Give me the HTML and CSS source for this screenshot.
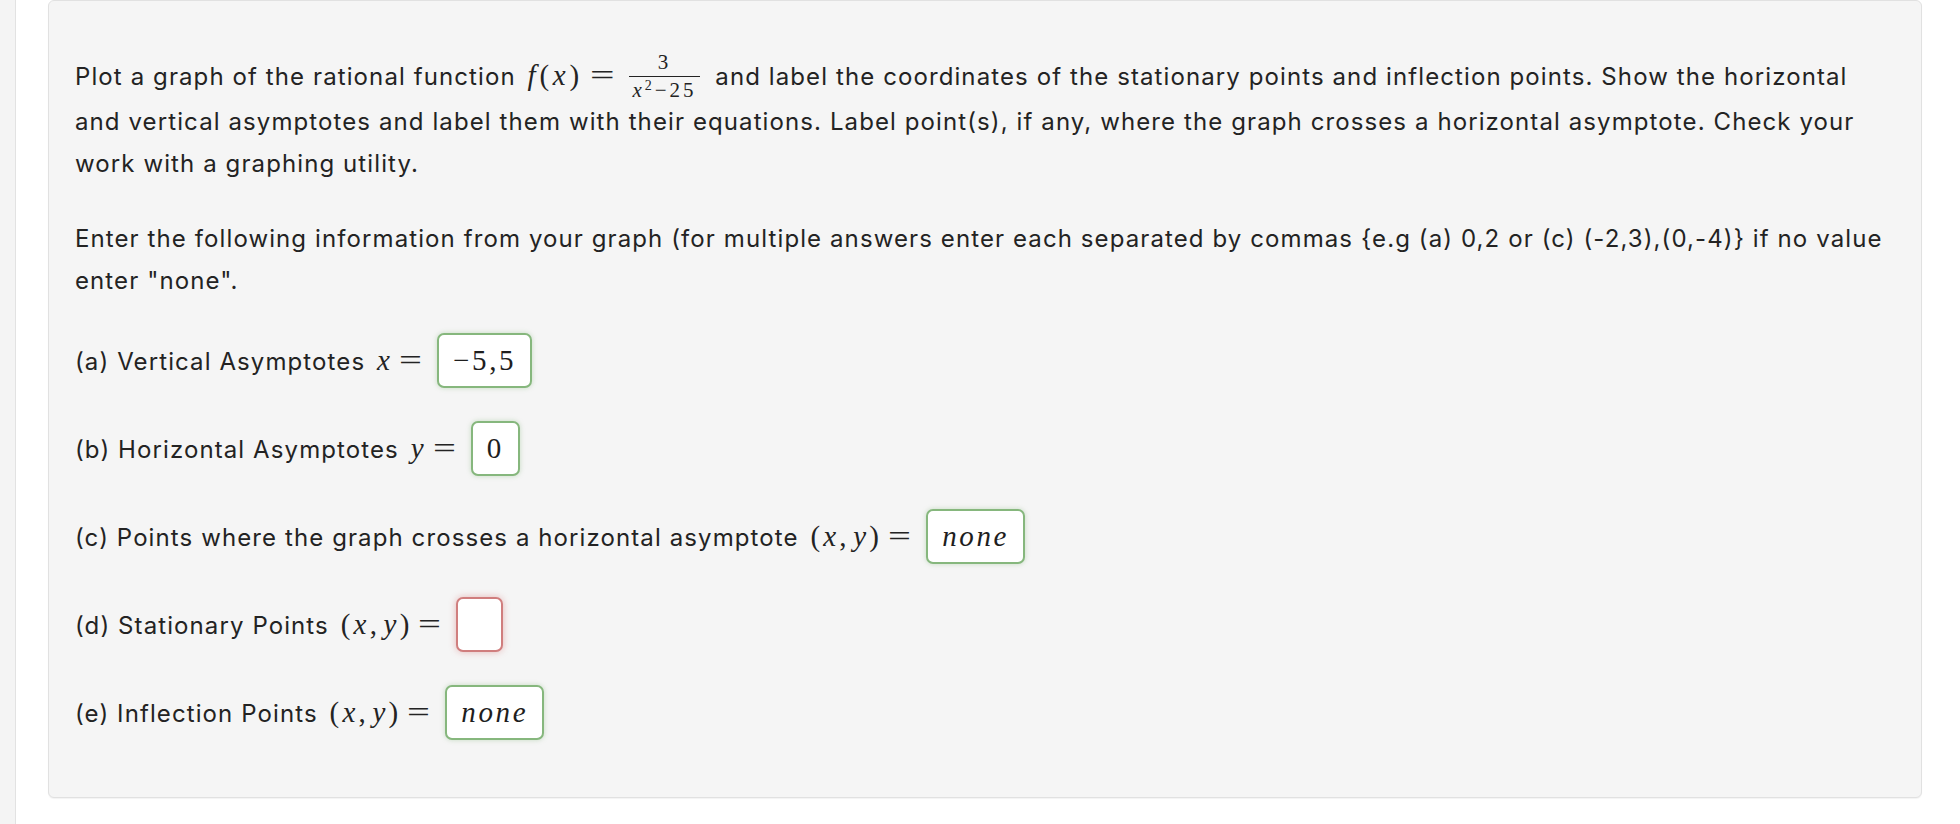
FILE: index.html
```html
<!DOCTYPE html>
<html lang="en">
<head>
<meta charset="utf-8">
<title>Rational function question</title>
<link rel="stylesheet" href="styles.css">
</head>
<body>
<div class="page">
  <div class="rail"></div>
  <main class="main">
    <section class="panel">
      <p class="para">Plot a graph of the rational function <span class="math eq"><i>f</i>(<i>x</i>)<span class="rel">=</span><span class="frac"><span class="num">3</span><span class="den"><i>x</i><sup>2</sup>−25</span></span></span> and label the coordinates of the stationary points and inflection points. Show the horizontal and vertical asymptotes and label them with their equations. Label point(s), if any, where the graph crosses a horizontal asymptote. Check your work with a graphing utility.</p>
      <p class="para last">Enter the following information from your graph (for multiple answers enter each separated by commas {e.g (a) 0,2 or (c) (-2,3),(0,-4)} if no value enter "none".</p>
      <div class="row">
        <span class="label">(a) Vertical Asymptotes <span class="math"><i>x</i><span class="rel">=</span></span></span>
        <span class="answer ok">−5,5</span>
      </div>
      <div class="row">
        <span class="label">(b) Horizontal Asymptotes <span class="math"><i>y</i><span class="rel">=</span></span></span>
        <span class="answer ok">0</span>
      </div>
      <div class="row">
        <span class="label">(c) Points where the graph crosses a horizontal asymptote <span class="math">(<i>x</i>,<span class="sp"></span><i>y</i>)<span class="rel">=</span></span></span>
        <span class="answer ok"><i>none</i></span>
      </div>
      <div class="row">
        <span class="label">(d) Stationary Points <span class="math">(<i>x</i>,<span class="sp"></span><i>y</i>)<span class="rel">=</span></span></span>
        <span class="answer bad"></span>
      </div>
      <div class="row">
        <span class="label">(e) Inflection Points <span class="math">(<i>x</i>,<span class="sp"></span><i>y</i>)<span class="rel">=</span></span></span>
        <span class="answer ok"><i>none</i></span>
      </div>
    </section>
  </main>
</div>
</body>
</html>
```

FILE: styles.css
```css
html, body {
  margin: 0;
  padding: 0;
  background: #ffffff;
}

.page {
  display: flex;
  min-height: 824px;
  font-family: "Inter", "Liberation Sans", sans-serif;
  color: #232323;
}

.rail {
  width: 15px;
  flex: none;
  background: #f4f4f4;
  border-right: 1px solid #e2e2e2;
}

.main {
  flex: 1;
  padding: 0 38px 0 32px;
  background: #ffffff;
}

.panel {
  background: #f5f5f5;
  border: 1px solid #e1e1e1;
  border-radius: 6px;
  box-shadow: 0 1px 1px rgba(0, 0, 0, 0.05);
  padding: 53px 22px 57px 26px;
  font-size: 24px;
  letter-spacing: 1.1px;
}

.para {
  margin: 0 0 32px 0;
  line-height: 42.5px;
}

.para.last {
  margin-bottom: 30px;
}

.math {
  font-family: "Liberation Serif", "DejaVu Serif", serif;
  font-size: 29px;
  letter-spacing: 0.11em;
  white-space: nowrap;
  margin: 0 3px 0 4px;
}

.math.eq {
  letter-spacing: 0.13em;
  margin-right: 7px;
}

.math i {
  font-style: italic;
}

.rel {
  display: inline-block;
  margin: 0 0.4em 0 0.34em;
  transform: scaleX(1.4);
}

.eq .rel {
  margin: 0 0.46em 0 0.42em;
  transform: scaleX(1.5);
}

.sp {
  display: inline-block;
  width: 0.12em;
}

.frac {
  display: inline-block;
  vertical-align: middle;
  margin-top: -4px;
  font-size: 21px;
  line-height: 1;
  letter-spacing: 0.14em;
  text-align: center;
}

.num {
  display: block;
  padding: 0 4px 3px;
  border-bottom: 1.5px solid #232323;
}

.den {
  display: block;
  padding: 3px 4px 0;
}

.den sup {
  font-size: 14px;
  vertical-align: 7px;
  line-height: 0;
}

.row {
  display: flex;
  align-items: center;
  height: 55px;
  margin-bottom: 33px;
}

.row:last-child {
  margin-bottom: 0;
}

.label {
  white-space: nowrap;
}

.answer {
  display: inline-flex;
  align-items: center;
  justify-content: center;
  box-sizing: border-box;
  height: 55px;
  min-width: 47px;
  padding: 0 14px;
  background: #ffffff;
  border: 2px solid #86b77d;
  border-radius: 7px;
  box-shadow: 0 0 5px rgba(110, 170, 100, 0.35);
  font-family: "Liberation Serif", "DejaVu Serif", serif;
  font-size: 29px;
  letter-spacing: 0.09em;
  color: #1e1e1e;
}

.answer.bad {
  border-color: #d07e7e;
  box-shadow: 0 0 7px rgba(210, 90, 90, 0.4);
}
```
